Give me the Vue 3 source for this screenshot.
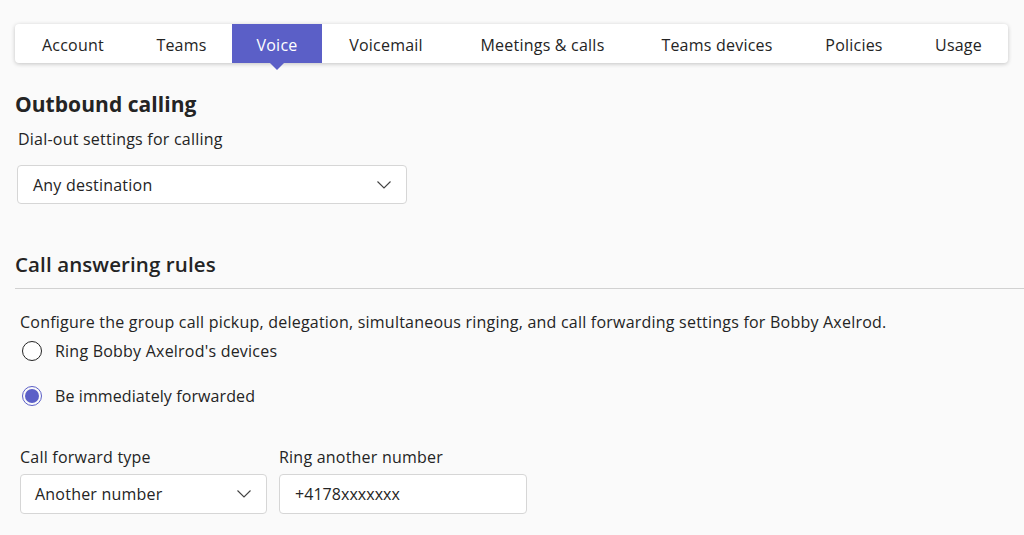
<template>
  <div class="page">
    <nav class="tabs" aria-label="User settings">
      <button v-for="t in tabs" :key="t" class="tab" :class="{ active: t === 'Voice' }">{{ t }}</button>
    </nav>

    <h2 class="title">Outbound calling</h2>
    <label class="dial-label">Dial-out settings for calling</label>
    <div class="select dial-select">
      <span>Any destination</span>
      <svg class="chevron" viewBox="0 0 16 10" fill="none" stroke="currentColor" stroke-width="1.1">
        <polyline points="1.5 1.5 8 8 14.5 1.5"/>
      </svg>
    </div>

    <h3 class="subtitle">Call answering rules</h3>
    <hr class="divider" />

    <div class="rules">
      <p class="rules-text">Configure the group call pickup, delegation, simultaneous ringing, and call forwarding settings for Bobby Axelrod.</p>
      <div class="radio-row first">
        <span class="radio"></span>
        <span>Ring Bobby Axelrod's devices</span>
      </div>
      <div class="radio-row second">
        <span class="radio checked"></span>
        <span class="forwarded">Be immediately forwarded</span>
      </div>

      <div class="forward">
        <div class="field type-field">
          <label>Call forward type</label>
          <div class="select type-select">
            <span>Another number</span>
            <svg class="chevron" viewBox="0 0 16 10" fill="none" stroke="currentColor" stroke-width="1.1">
              <polyline points="1.5 1.5 8 8 14.5 1.5"/>
            </svg>
          </div>
        </div>
        <div class="field number-field">
          <label>Ring another number</label>
          <div class="select number">+4178xxxxxxx</div>
        </div>
      </div>
    </div>
  </div>
</template>

<script setup>
const tabs = ['Account', 'Teams', 'Voice', 'Voicemail', 'Meetings & calls', 'Teams devices', 'Policies', 'Usage']
</script>

<style>
html, body { margin: 0; background: #fafafa; }
</style>

<style scoped>
.page {
  height: 535px;
  overflow: hidden;
  box-sizing: border-box;
  padding-top: 24px;
  background: #fafafa;
  color: #242424;
  font-family: "Open Sans", "Noto Sans", sans-serif;
  font-size: 16px;
  letter-spacing: 0.22px;
}

.tabs {
  display: grid;
  grid-template-columns: 116px 101px 90px 128px 185px 164px 110px 99px;
  width: 993px;
  height: 39px;
  margin-left: 15px;
  background: #fff;
  border-radius: 4px;
  box-shadow: 0 1px 4px rgba(0, 0, 0, 0.22);
}
.tab {
  position: relative;
  padding: 2px 0 0;
  border: none;
  background: transparent;
  color: #242424;
  font: inherit;
  letter-spacing: inherit;
}
.tab.active {
  background: #5b5fc7;
  color: #fff;
}
.tab.active::after {
  content: "";
  position: absolute;
  left: 50%;
  top: 100%;
  margin-left: -7px;
  border: 7px solid transparent;
  border-top-color: #5b5fc7;
  border-bottom: none;
}

.title {
  margin: 28px 0 0 15px;
  font-size: 21px;
  line-height: 27px;
  font-weight: 700;
  letter-spacing: 0.05px;
}
.dial-label {
  display: block;
  margin: 10px 0 0 18px;
  line-height: 22px;
}

.select {
  box-sizing: border-box;
  display: flex;
  align-items: center;
  justify-content: space-between;
  height: 40px;
  padding: 0 14px 0 15px;
  background: #fff;
  border: 1px solid #d6d6d6;
  border-radius: 4px;
}
.dial-select {
  width: 390px;
  height: 39px;
  margin: 15px 0 0 17px;
}
.type-select { padding-left: 14px; }
.chevron {
  width: 16px;
  height: 10px;
  color: #424242;
}

.subtitle {
  margin: 47px 0 0 15px;
  font-size: 20.5px;
  line-height: 27px;
  font-weight: 600;
  letter-spacing: 0.1px;
}
.divider {
  margin: 10px 0 0 15px;
  border: none;
  border-top: 1px solid #d1d1d1;
}

.rules { padding-left: 20px; }
.rules-text {
  margin: 22px 0 0;
  line-height: 22px;
}
.radio-row {
  display: flex;
  align-items: center;
  gap: 13px;
  height: 24px;
  margin-left: 2px;
}
.radio-row.first { margin-top: 6px; }
.radio-row.second { margin-top: 21px; }
.forwarded { letter-spacing: 0.1px; }
.radio {
  box-sizing: border-box;
  width: 20px;
  height: 20px;
  border: 1px solid #242424;
  border-radius: 50%;
  background: #fff;
}
.radio.checked {
  border-color: #5b5fc7;
  padding: 2px;
  background: #5b5fc7 content-box;
}

.forward {
  display: flex;
  gap: 12px;
  margin-top: 38px;
}
.field label {
  display: block;
  line-height: 22px;
  margin-bottom: 6px;
}
.type-field { width: 247px; }
.number-field { width: 248px; }
.number {
  justify-content: flex-start;
  letter-spacing: 0.05px;
}
</style>
